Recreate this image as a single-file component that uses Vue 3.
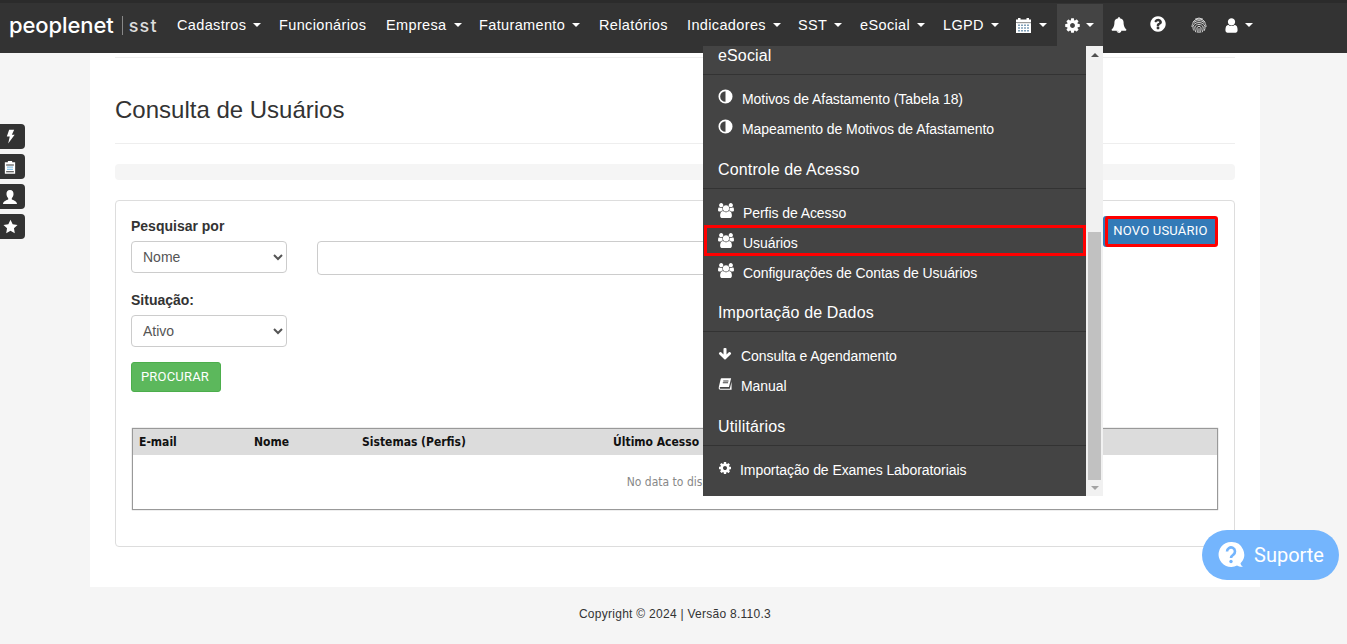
<template>
  <div class="page">
    <nav class="navbar">
      <div class="brand"><span class="brand-name">peoplenet</span><span class="brand-sep"></span><span class="brand-sub">sst</span></div>
      <ul class="nav-list">
        <li v-for="item in navItems" :key="item.label" class="nav-item" :style="{ width: item.width + 'px' }">
          {{ item.label }}<span v-if="item.caret" class="caret"></span>
        </li>
        <li class="nav-item icon-item cal">
          <svg viewBox="0 0 15 15" width="15" height="15">
            <path fill="#fff" d="M0 1.500h2V0h2.500v1.500h6V0H13v1.500h2V15H0z" />
            <path fill="#333" d="M0 4.500h15v.6H0z" />
            <g fill="#7f9fb8">
              <path d="M2 6.500h2V8H2zM5 6.500h2V8H5zM8 6.500h2V8H8zM11 6.500h2V8h-2z" />
              <path d="M2 9.200h2v1.500H2zM5 9.200h2v1.500H5zM8 9.200h2v1.500H8zM11 9.200h2v1.500h-2z" />
              <path d="M2 12h2v1.500H2zM5 12h2v1.500H5zM8 12h2v1.500H8zM11 12h2v1.500h-2z" />
            </g>
          </svg>
          <span class="caret"></span>
        </li>
        <li class="nav-item icon-item gear active">
          <svg viewBox="0 0 1792 1792" width="17" height="17"><path fill="#fff" :d="cogPath" /></svg>
          <span class="caret"></span>
        </li>
        <li class="nav-item icon-item bell">
          <svg viewBox="0 0 1792 1792" width="16" height="16"><path fill="#fff" :d="bellPath" /></svg>
        </li>
        <li class="nav-item icon-item help">
          <svg viewBox="0 0 1792 1792" width="18" height="18"><path fill="#fff" :d="helpPath" /></svg>
        </li>
        <li class="nav-item icon-item finger">
          <svg viewBox="0 0 16 16" width="16" height="16" fill="none" stroke="#d8d8d8" stroke-width="1">
            <path d="M4 2.200a8 8 0 0 1 8 0" />
            <path d="M1.700 5.500a7.500 7.500 0 0 1 12.600 0" />
            <path d="M1 10c-.2-4 3-6.300 7-6.300s7.200 2.300 7 6.300" />
            <path d="M2.800 13.500c-.8-1.500-.9-3-.8-4C2.400 7 5 5.600 8 5.600s5.600 1.400 6 3.900c.1 1.400-.1 3-.8 4.300" />
            <path d="M5 15.300c-1-1.700-1.300-3.500-1.100-5.300C4.300 8.400 6 7.500 8 7.500s3.700.9 4.100 2.500c.2 1.800-.1 3.700-1.100 5.300" />
            <path d="M7 15.800c-.8-1.700-1.200-3.400-1-5 .2-.9 1-1.400 2-1.400s1.800.5 2 1.400c.2 1.600-.2 3.300-1 5" />
            <path d="M8 11.200v4.600" />
          </svg>
        </li>
        <li class="nav-item icon-item user">
          <svg viewBox="0 0 1792 1792" width="17" height="17"><path fill="#fff" :d="userPath" /></svg>
          <span class="caret"></span>
        </li>
      </ul>
    </nav>

    <div class="side-tabs">
      <div class="side-tab">
        <svg viewBox="0 0 12 16" width="11" height="15"><path fill="#fff" d="M4.500 .500h5.500L7.500 6H10.500L3.500 15.500 5.200 8H2z" /></svg>
      </div>
      <div class="side-tab">
        <svg viewBox="0 0 14 16" width="12" height="14">
          <path fill="#fff" d="M1 2.500h3.500V1h5v1.500H13V16H1z" />
          <path fill="#333" d="M2.500 5h9v1.200h-9zM2.500 13h9v1.200h-9z" />
          <path fill="#8bc4e8" d="M3.500 7.500h7V9h-7zM3.500 10h7v1.500h-7z" />
        </svg>
      </div>
      <div class="side-tab">
        <svg viewBox="0 0 16 16" width="16" height="16"><path fill="#fff" d="M8 1c2.500 0 3.800 2 3.500 4.500-.2 1.800-1 3-1.700 3.800v1.200c1.500.8 5.200 1.500 5.200 4.500H1c0-3 3.700-3.700 5.200-4.500V9.300C5.500 8.500 4.700 7.300 4.500 5.500 4.200 3 5.500 1 8 1z" /></svg>
      </div>
      <div class="side-tab">
        <svg viewBox="0 0 16 16" width="15" height="15"><path fill="#fff" d="M8 .8l2.300 4.800 5.200.7-3.800 3.600.9 5.200L8 12.600l-4.600 2.500.9-5.200L.5 6.300l5.200-.7z" /></svg>
      </div>
    </div>

    <main class="container">
      <hr class="top-line" />
      <h1 class="page-title">Consulta de Usuários</h1>
      <div class="progress-bar"></div>

      <section class="panel">
        <div class="panel-top">
          <div class="filters">
            <label class="field-label">Pesquisar por</label>
            <div class="search-row">
              <select class="select-field"><option>Nome</option></select>
              <input class="input-field" type="text" />
            </div>
            <label class="field-label second">Situação:</label>
            <select class="select-field"><option>Ativo</option></select>
            <button class="btn btn-green">PROCURAR</button>
          </div>
          <button class="btn btn-blue">NOVO USUÁRIO</button>
        </div>

        <div class="grid">
          <div class="grid-head">
            <span class="col-email">E-mail</span>
            <span class="col-name">Nome</span>
            <span class="col-sys">Sistemas (Perfis)</span>
            <span>Último Acesso</span>
          </div>
          <div class="grid-empty">No data to display</div>
        </div>
      </section>
    </main>

    <footer class="footer">Copyright © 2024 | Versão 8.110.3</footer>

    <div class="dropdown">
      <div class="dropdown-scroll">
        <div v-for="group in menuGroups" :key="group.title" class="menu-group">
          <div class="menu-title">{{ group.title }}</div>
          <ul class="menu-list" :class="{ short: group.items.length === 2 }">
            <li v-for="row in group.items" :key="row.label" class="menu-row" :class="{ marked: row.marked }">
              <span class="menu-icon">
                <svg v-if="row.icon === 'adjust'" viewBox="0 0 16 16" width="15" height="15">
                  <circle cx="8" cy="8" r="6.600" fill="none" stroke="#fff" stroke-width="1.800" />
                  <path fill="#fff" d="M8 1.500a6.500 6.500 0 0 1 0 13z" />
                </svg>
                <svg v-else-if="row.icon === 'users'" viewBox="0 0 1920 1792" width="16" height="15"><path fill="#fff" :d="usersPath" /></svg>
                <svg v-else-if="row.icon === 'down'" viewBox="0 0 1792 1792" width="14" height="14"><path fill="#fff" :d="arrowPath" /></svg>
                <svg v-else-if="row.icon === 'book'" viewBox="0 0 16 16" width="14" height="14">
                  <path fill="#fff" d="M4 1.500h11l-2.500 10H3c-.8 0-1 .5-1 1s.3 1 1 1h10.500l2-8v9H3c-2 0-2.500-1.500-2-3.500L3 2.500c.1-.6.5-1 1-1z" />
                  <path fill="#444" d="M6 4h6v1H6zM5.500 6h6v1h-6z" />
                </svg>
                <svg v-else viewBox="0 0 1792 1792" width="14" height="14"><path fill="#fff" :d="cogPath" /></svg>
              </span>
              <span class="menu-label" :style="{ marginLeft: row.gap + 'px' }">{{ row.label }}</span>
            </li>
          </ul>
        </div>
      </div>
      <div class="scrollbar">
        <span class="arrow-up"></span>
        <div class="track"><div class="thumb"></div></div>
        <span class="arrow-down"></span>
      </div>
    </div>

    <div class="support">
      <svg viewBox="0 0 28 28" width="28" height="28">
        <path fill="#fff" d="M13 1a12.500 12.500 0 1 0 6 23.500c1.500 1 3.500 1.500 6 1.300-1.500-.8-2.300-2-2.500-3.500A12.500 12.500 0 0 0 13 1z" />
        <path fill="none" stroke="#74b5fd" stroke-width="2.600" d="M9 10.500a4 4 0 1 1 6.200 3.300c-1.400 1-2.200 1.700-2.200 3.200" />
        <circle cx="13" cy="20.500" r="1.700" fill="#74b5fd" />
      </svg>
      <span>Suporte</span>
    </div>
  </div>
</template>

<script setup>
const cogPath = 'M1152 896q0-106-75-181t-181-75-181 75-75 181 75 181 181 75 181-75 75-181zm512-109v222q0 12-8 23t-20 13l-185 28q-19 54-39 91 35 50 107 138 10 12 10 25t-9 23q-27 37-99 108t-94 71q-12 0-26-9l-138-108q-44 23-91 38-16 136-29 186-7 28-36 28h-222q-14 0-24.500-8.500t-11.500-21.500l-28-184q-49-16-90-37l-141 107q-10 9-25 9-14 0-25-11-126-114-165-168-7-10-7-23 0-12 8-23 15-21 51-66.500t54-70.500q-27-50-41-99l-183-27q-13-2-21-12.500t-8-23.500v-222q0-12 8-23t19-13l186-28q14-46 39-92-40-57-107-138-10-12-10-24 0-10 9-23 26-36 98.500-107.500t94.500-71.500q13 0 26 10l138 107q44-23 91-38 16-136 29-186 7-28 36-28h222q14 0 24.500 8.500t11.500 21.500l28 184q49 16 90 37l142-107q9-9 24-9 13 0 25 10 129 119 165 170 7 8 7 22 0 12-8 23-15 21-51 66.500t-54 70.500q26 50 41 98l183 28q13 2 21 12.500t8 23.500z'
const bellPath = 'M912 1696q0-16-16-16-59 0-101.500-42.500t-42.500-101.500q0-16-16-16t-16 16q0 73 51.500 124.500t124.500 51.500q16 0 16-16zm816-288q0 52-38 90t-90 38h-448q0 106-75 181t-181 75-181-75-75-181h-448q-52 0-90-38t-38-90q50-42 91-88t85-119.500 74.500-158.500 50-206 19.500-260q0-152 117-282.500t307-158.500q-8-19-8-39 0-40 28-68t68-28 68 28 28 68q0 20-8 39 190 28 307 158.500t117 282.500q0 139 19.500 260t50 206 74.500 158.500 85 119.500 91 88z'
const helpPath = 'M1024 1376v-192q0-14-9-23t-23-9h-192q-14 0-23 9t-9 23v192q0 14 9 23t23 9h192q14 0 23-9t9-23zm256-672q0-88-55.500-163t-138.500-116-170-41q-243 0-371 213-15 24 8 42l132 100q7 6 19 6 16 0 25-12 53-68 86-92 34-24 86-24 48 0 85.500 26t37.500 59q0 38-20 61t-68 45q-63 28-115.500 86.500t-52.500 125.500v36q0 14 9 23t23 9h192q14 0 23-9t9-23q0-19 21.500-49.500t54.500-49.500q32-18 49-28.500t46-35 44.500-48 28-60.500 12.500-81zm384 192q0 209-103 385.500t-279.500 279.500-385.500 103-385.500-103-279.500-279.500-103-385.500 103-385.500 279.500-279.500 385.500-103 385.500 103 279.500 279.500 103 385.500z'
const userPath = 'M1536 1399q0 109-62.500 187t-150.500 78h-854q-88 0-150.500-78t-62.500-187q0-85 8.500-160.500t31.500-152 58.500-131 94-89 134.500-34.500q131 128 313 128t313-128q76 0 134.500 34.500t94 89 58.500 131 31.500 152 8.500 160.500zm-256-887q0 159-112.500 271.500t-271.500 112.500-271.500-112.500-112.500-271.500 112.500-271.500 271.500-112.500 271.500 112.500 112.500 271.500z'
const usersPath = 'M593 896q-162 5-265 128h-134q-82 0-138-40.500t-56-118.500q0-353 124-353 6 0 43.500 21t97.500 42.500 119 21.500q67 0 133-23-5 37-5 66 0 139 81 256zm1071 637q0 120-73 189.500t-194 69.500h-874q-121 0-194-69.500t-73-189.500q0-53 3.500-103.500t14-109 26.500-108.500 43-97.500 62-81 85.500-53.500 111.500-20q10 0 43 21.500t73 48 107 48 135 21.500 135-21.500 107-48 73-48 43-21.500q61 0 111.500 20t85.500 53.500 62 81 43 97.500 26.500 108.500 14 109 3.500 103.500zm-1024-1277q0 106-75 181t-181 75-181-75-75-181 75-181 181-75 181 75 75 181zm704 384q0 159-112.500 271.500t-271.500 112.500-271.500-112.500-112.500-271.500 112.500-271.500 271.500-112.500 271.500 112.500 112.500 271.500zm576 225q0 78-56 118.500t-138 40.500h-134q-103-123-265-128 81-117 81-256 0-29-5-66 66 23 133 23 59 0 119-21.500t97.500-42.500 43.500-21q124 0 124 353zm-128-609q0 106-75 181t-181 75-181-75-75-181 75-181 181-75 181 75 75 181z'
const arrowPath = 'M1675 832q0 53-37 90l-651 652q-39 37-91 37-53 0-90-37l-651-652q-38-36-38-90 0-53 38-91l74-75q39-37 91-37 53 0 90 37l294 294v-704q0-52 38-90t90-38h128q52 0 90 38t38 90v704l294-294q37-37 90-37 52 0 91 37l75 75q37 39 37 91z'

const navItems = [
  { label: 'Cadastros', caret: true, width: 102 },
  { label: 'Funcionários', width: 107 },
  { label: 'Empresa', caret: true, width: 93 },
  { label: 'Faturamento', caret: true, width: 120 },
  { label: 'Relatórios', width: 88 },
  { label: 'Indicadores', caret: true, width: 111 },
  { label: 'SST', caret: true, width: 62 },
  { label: 'eSocial', caret: true, width: 83 },
  { label: 'LGPD', caret: true, width: 74 },
]

const menuGroups = [
  {
    title: 'eSocial',
    items: [
      { label: 'Motivos de Afastamento (Tabela 18)', icon: 'adjust', gap: 8 },
      { label: 'Mapeamento de Motivos de Afastamento', icon: 'adjust', gap: 8 },
    ],
  },
  {
    title: 'Controle de Acesso',
    items: [
      { label: 'Perfis de Acesso', icon: 'users', gap: 9 },
      { label: 'Usuários', icon: 'users', gap: 9, marked: true },
      { label: 'Configurações de Contas de Usuários', icon: 'users', gap: 9 },
    ],
  },
  {
    title: 'Importação de Dados',
    items: [
      { label: 'Consulta e Agendamento', icon: 'down', gap: 7 },
      { label: 'Manual', icon: 'book', gap: 7 },
    ],
  },
  {
    title: 'Utilitários',
    items: [{ label: 'Importação de Exames Laboratoriais', icon: 'gear', gap: 6 }],
  },
]
</script>

<style>
html,
body {
  margin: 0;
  background: #f5f5f5;
  overflow: hidden;
}
</style>

<style scoped>
* {
  box-sizing: border-box;
}

.page {
  position: relative;
  height: 644px;
  overflow: hidden;
  font-family: 'Liberation Sans', Arial, sans-serif;
  font-size: 14px;
  color: #333;
}

.navbar {
  display: flex;
  align-items: flex-start;
  height: 53px;
  padding-top: 1px;
  background: #333;
  border-top: 3px solid #2b2b2b;
  color: #fff;
}

.brand {
  display: flex;
  align-items: center;
  width: 168px;
  height: 42px;
  padding-left: 9px;
  font-family: 'Inter', sans-serif;
  color: #fff;
}

.brand-name {
  font-size: 22px;
  font-weight: 500;
  letter-spacing: -0.1px;
}

.brand-sep {
  width: 1px;
  height: 19px;
  margin: 0 6px 0 8px;
  background: #888;
}

.brand-sub {
  font-size: 18px;
  font-weight: 500;
  letter-spacing: 1.2px;
  color: #ddd;
}

.nav-list {
  display: flex;
  margin: 0;
  padding: 0;
  list-style: none;
}

.nav-item {
  display: flex;
  align-items: center;
  flex: none;
  height: 42px;
  padding-left: 9px;
  font-size: 14.5px;
  letter-spacing: 0.36px;
  white-space: nowrap;
}

.caret {
  width: 0;
  height: 0;
  margin-left: 7px;
  border-top: 4px solid #fff;
  border-left: 4px solid transparent;
  border-right: 4px solid transparent;
}

.cal {
  width: 49px;
  padding-left: 8px;
}

.cal .caret {
  margin-left: 8px;
}

.gear {
  width: 46px;
  padding-left: 7px;
}

.gear .caret {
  margin-left: 5px;
}

.active {
  background: #444;
}

.bell {
  width: 38px;
  padding-left: 8px;
}

.help {
  width: 40px;
  padding-left: 8px;
  padding-bottom: 3px;
}

.finger {
  width: 35px;
  padding-left: 10px;
}

.user {
  padding-left: 7px;
}

.user .caret {
  margin-left: 5px;
}

.side-tabs {
  position: absolute;
  top: 124px;
  left: 0;
  display: flex;
  flex-direction: column;
  gap: 5px;
}

.side-tab {
  display: flex;
  align-items: center;
  justify-content: center;
  width: 25px;
  height: 25px;
  padding-right: 5px;
  background: #333;
  border-radius: 0 4px 4px 0;
}

.container {
  width: 1170px;
  margin: 0 auto 0 90px;
  padding: 4px 25px 40px;
  background: #fff;
}

.top-line {
  margin: 0;
  border: 0;
  border-top: 1px solid #eee;
}

.page-title {
  margin: 39px 0 0;
  padding-bottom: 20px;
  border-bottom: 1px solid #eee;
  font-size: 24px;
  font-weight: 400;
  line-height: 26px;
}

.progress-bar {
  height: 16px;
  margin: 20px 0;
  background: #f5f5f5;
  border-radius: 4px;
}

.panel {
  height: 347px;
  padding: 15px 16px 15px 15px;
  background: #fff;
  border: 1px solid #ddd;
  border-radius: 4px;
}

.panel-top {
  display: flex;
  align-items: flex-start;
  justify-content: space-between;
}

.filters {
  width: 960px;
}

.field-label {
  display: block;
  height: 20px;
  margin-bottom: 5px;
  font-weight: 700;
  line-height: 20px;
}

.field-label.second {
  margin-top: 15px;
}

.search-row {
  display: flex;
  gap: 30px;
}

.select-field {
  display: block;
  width: 156px;
  height: 32px;
  padding-left: 7px;
  color: #555;
  font-family: inherit;
  font-size: 14px;
  background: #fff;
  border: 1px solid #ccc;
  border-radius: 4px;
}

.input-field {
  flex: 1;
  height: 34px;
  background: #fff;
  border: 1px solid #ccc;
  border-radius: 4px;
}

.btn {
  display: block;
  font-family: 'Roboto', sans-serif;
  font-size: 13px;
  font-weight: 400;
  letter-spacing: 0.2px;
  color: #fff;
  border-radius: 3px;
}

.btn-green {
  width: 90px;
  height: 30px;
  margin-top: 15px;
  padding: 0 2px 1px 0;
  background: #5cb85c;
  border: 1px solid #4cae4c;
}

.btn-blue {
  width: 113px;
  height: 31px;
  padding: 0 2px 2px 0;
  background: #337ab7;
  border: 3px solid #f00;
  box-shadow: -2px 0 0 #337ab7;
}

.grid {
  height: 82px;
  margin: 36px 0 0 1px;
  border: 1px solid #999;
  box-shadow: 0 0 1px #999;
  font-family: 'DejaVu Sans', sans-serif;
  font-stretch: condensed;
  font-size: 12px;
}

.grid-head {
  display: flex;
  align-items: center;
  height: 26px;
  padding-left: 6px;
  background: #dcdcdc;
  color: #111;
  font-weight: 700;
}

.col-email {
  width: 115px;
}

.col-name {
  width: 108px;
}

.col-sys {
  width: 251px;
}

.grid-empty {
  padding: 20px 0 0 2px;
  color: #888;
  text-align: center;
}

.footer {
  padding: 20px 0 0 3px;
  text-align: center;
  font-size: 12px;
  letter-spacing: 0.27px;
  color: #333;
}

.dropdown {
  position: absolute;
  top: 46px;
  left: 703px;
  display: flex;
  width: 400px;
  height: 450px;
  background: #444;
  color: #fff;
}

.dropdown-scroll {
  width: 383px;
  height: 450px;
  overflow: hidden;
}

.menu-group:first-child {
  margin-top: -9px;
}

.menu-title {
  height: 38px;
  padding: 0 15px;
  font-size: 16px;
  letter-spacing: 0.15px;
  line-height: 38px;
  border-bottom: 1px solid #333;
}

.menu-list {
  margin: 0;
  padding: 9px 0 6px;
  list-style: none;
}

.menu-list.short {
  padding-bottom: 7px;
}

.menu-row {
  position: relative;
  display: flex;
  align-items: center;
  height: 30px;
  padding-left: 15px;
  font-size: 14px;
  letter-spacing: -0.07px;
}

.menu-row.marked::after {
  content: '';
  position: absolute;
  top: -3px;
  left: 1px;
  right: 0;
  box-sizing: border-box;
  height: 31px;
  border: 3px solid #f00;
}

.menu-icon {
  display: flex;
  align-items: center;
  width: 16px;
  margin-top: -5px;
}

.scrollbar {
  display: flex;
  flex-direction: column;
  align-items: center;
  width: 17px;
  height: 450px;
  background: #f1f1f1;
}

.arrow-up {
  width: 0;
  height: 0;
  margin: 7px 0 6px;
  border-bottom: 4px solid #505050;
  border-left: 4px solid transparent;
  border-right: 4px solid transparent;
}

.track {
  flex: 1;
  width: 100%;
}

.thumb {
  width: 13px;
  height: 248px;
  margin: 169px 2px 0;
  background: #c1c1c1;
}

.arrow-down {
  width: 0;
  height: 0;
  margin: 6px 0 7px;
  border-top: 4px solid #a3a3a3;
  border-left: 4px solid transparent;
  border-right: 4px solid transparent;
}

.support {
  position: absolute;
  top: 530px;
  left: 1202px;
  display: flex;
  align-items: center;
  gap: 8px;
  width: 137px;
  height: 50px;
  padding-left: 16px;
  background: #74b5fd;
  border-radius: 25px;
  font-family: 'Roboto', sans-serif;
  font-size: 20px;
  color: #fff;
}
</style>
